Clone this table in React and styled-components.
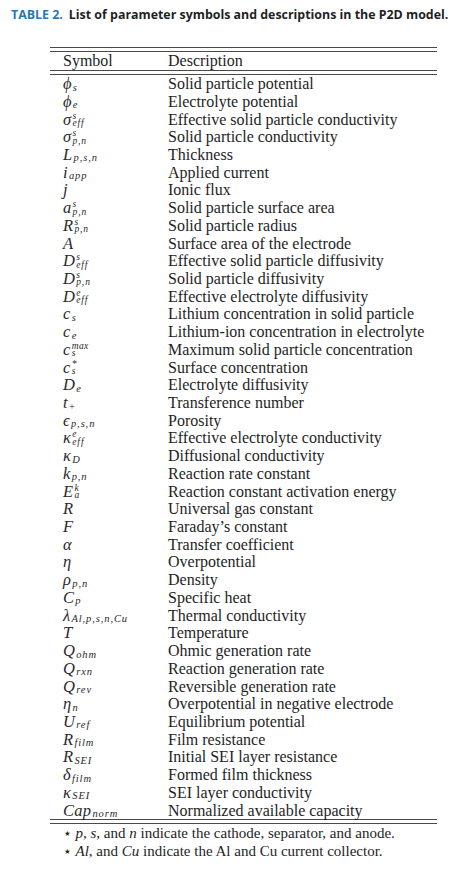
import React from 'react';
import styled, { createGlobalStyle } from 'styled-components';

const GlobalStyle = createGlobalStyle`
  html, body {
    margin: 0;
    padding: 0;
    background: #ffffff;
  }
  body {
    width: 474px;
    font-family: "Liberation Serif", "Times New Roman", serif;
    color: #1e1e1e;
  }
`;

// each row: [base, sup, sub, description]
const rows = [
  ['\u03d5', null, 's', 'Solid particle potential'],
  ['\u03d5', null, 'e', 'Electrolyte potential'],
  ['\u03c3', 's', 'eff', 'Effective solid particle conductivity'],
  ['\u03c3', 's', 'p,n', 'Solid particle conductivity'],
  ['L', null, 'p,s,n', 'Thickness'],
  ['i', null, 'app', 'Applied current'],
  ['j', null, null, 'Ionic flux'],
  ['a', 's', 'p,n', 'Solid particle surface area'],
  ['R', 's', 'p,n', 'Solid particle radius'],
  ['A', null, null, 'Surface area of the electrode'],
  ['D', 's', 'eff', 'Effective solid particle diffusivity'],
  ['D', 's', 'p,n', 'Solid particle diffusivity'],
  ['D', 'e', 'eff', 'Effective electrolyte diffusivity'],
  ['c', null, 's', 'Lithium concentration in solid particle'],
  ['c', null, 'e', 'Lithium-ion concentration in electrolyte'],
  ['c', 'max', 's', 'Maximum solid particle concentration'],
  ['c', '*', 's', 'Surface concentration'],
  ['D', null, 'e', 'Electrolyte diffusivity'],
  ['t', null, '+', 'Transference number'],
  ['\u03f5', null, 'p,s,n', 'Porosity'],
  ['\u03ba', 'e', 'eff', 'Effective electrolyte conductivity'],
  ['\u03ba', null, 'D', 'Diffusional conductivity'],
  ['k', null, 'p,n', 'Reaction rate constant'],
  ['E', 'k', 'a', 'Reaction constant activation energy'],
  ['R', null, null, 'Universal gas constant'],
  ['F', null, null, 'Faraday\u2019s constant'],
  ['\u03b1', null, null, 'Transfer coefficient'],
  ['\u03b7', null, null, 'Overpotential'],
  ['\u03c1', null, 'p,n', 'Density'],
  ['C', null, 'p', 'Specific heat'],
  ['\u03bb', null, 'Al,p,s,n,Cu', 'Thermal conductivity'],
  ['T', null, null, 'Temperature'],
  ['Q', null, 'ohm', 'Ohmic generation rate'],
  ['Q', null, 'rxn', 'Reaction generation rate'],
  ['Q', null, 'rev', 'Reversible generation rate'],
  ['\u03b7', null, 'n', 'Overpotential in negative electrode'],
  ['U', null, 'ref', 'Equilibrium potential'],
  ['R', null, 'film', 'Film resistance'],
  ['R', null, 'SEI', 'Initial SEI layer resistance'],
  ['\u03b4', null, 'film', 'Formed film thickness'],
  ['\u03ba', null, 'SEI', 'SEI layer conductivity'],
  ['Cap', null, 'norm', 'Normalized available capacity'],
];

function Sym({ base, sup, sub }) {
  return (
    <SymWrap>
      <Base>{base}</Base>
      {sup && sub && (
        <Stack>
          <Sup>{sup}</Sup>
          <Sub>{sub}</Sub>
        </Stack>
      )}
      {!sup && sub && <LowSub $upright={sub === '+'}>{sub}</LowSub>}
    </SymWrap>
  );
}

export default function App() {
  return (
    <>
      <GlobalStyle />
      <Page>
        <Title>
          <Label>TABLE 2.</Label>
          List of parameter symbols and descriptions in the P2D model.
        </Title>

        <Table>
          <DoubleRule />
          <Row>
            <SymCell>Symbol</SymCell>
            <DescCell>Description</DescCell>
          </Row>
          <DoubleRule />
          <Body>
            {rows.map(([base, sup, sub, desc], i) => (
              <Row key={i}>
                <SymCell>
                  <Sym base={base} sup={sup} sub={sub} />
                </SymCell>
                <DescCell>{desc}</DescCell>
              </Row>
            ))}
          </Body>
          <DoubleRule />
          <Notes>
            <Note>
              <Star>{'\u22c6'}</Star> <i>p</i>, <i>s</i>, and <i>n</i> indicate the cathode, separator, and anode.
            </Note>
            <Note>
              <Star>{'\u22c6'}</Star> <i>Al</i>, and <i>Cu</i> indicate the Al and Cu current collector.
            </Note>
          </Notes>
        </Table>
      </Page>
    </>
  );
}

const Page = styled.div`
  padding: 6px 0 0 0;
`;

const Title = styled.h1`
  margin: 0 0 0 11px;
  font-family: "Open Sans", "Noto Sans", sans-serif;
  font-weight: 700;
  font-size: 12.4px;
  line-height: 18px;
  color: #1f1f1f;
  white-space: nowrap;
`;

const Label = styled.span`
  color: #2877b6;
  margin-right: 6px;
`;

const Table = styled.div`
  width: 387px;
  margin: 23px 0 0 50px;
`;

const DoubleRule = styled.div`
  height: 3px;
  border-top: 1px solid #4a4a4a;
  border-bottom: 1px solid #4a4a4a;
`;

const Body = styled.div`
  display: flex;
  flex-direction: column;
`;

const Row = styled.div`
  display: grid;
  grid-template-columns: 118px 1fr;
  height: 17.72px;
  align-items: center;
  font-size: 16px;
  line-height: 17px;
  white-space: nowrap;
`;

const SymCell = styled.div`
  padding-left: 13px;
  display: flex;
  align-items: center;
`;

const DescCell = styled.div``;

const SymWrap = styled.span`
  display: inline-flex;
  align-items: center;
  font-style: italic;
  font-size: 16.5px;
  line-height: 17px;
  color: #2a2a2a;
`;

const Base = styled.span`
  letter-spacing: 0.3px;
`;

const Stack = styled.span`
  display: inline-flex;
  flex-direction: column;
  font-size: 9.5px;
  line-height: 7.5px;
  margin-left: 1px;
  transform: translateY(1px);
`;

const Sup = styled.span`
  letter-spacing: 0.4px;
`;

const Sub = styled.span`
  letter-spacing: 0.9px;
`;

const LowSub = styled.span`
  font-size: 10.5px;
  line-height: 8px;
  margin-left: 1px;
  letter-spacing: 0.9px;
  transform: translateY(4px);
  font-style: ${(p) => (p.$upright ? 'normal' : 'italic')};
`;

const Notes = styled.div`
  padding: 0 0 0 13px;
  font-size: 15px;
  line-height: 18px;
  white-space: nowrap;
`;

const Note = styled.div``;

const Star = styled.span`
  font-family: "DejaVu Sans", sans-serif;
  font-size: 14px;
  vertical-align: 0;
`;
